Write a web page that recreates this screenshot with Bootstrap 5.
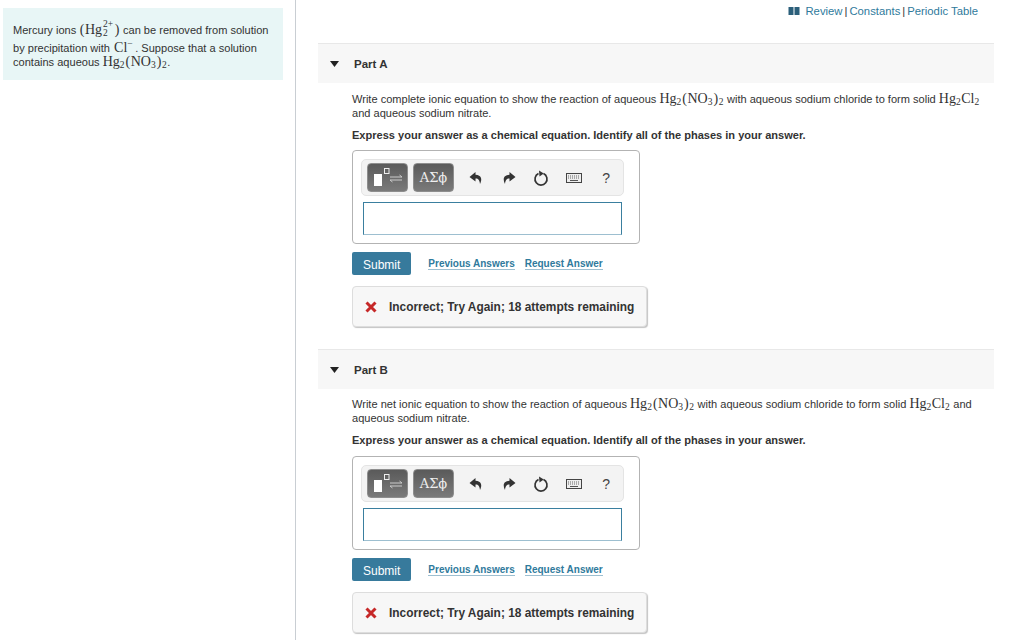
<!DOCTYPE html>
<html lang="en">

<head>
    <meta charset="UTF-8">
    <meta name="viewport" content="width=device-width, initial-scale=1.0">
    <link href="https://cdn.jsdelivr.net/npm/bootstrap@5.3.3/dist/css/bootstrap.min.css" rel="stylesheet">
    <title>Part A and Part B</title>

    <style>
        html, body {
            height: 640px;
            overflow: hidden;
        }

        body {
            font-family: "Liberation Sans", Arial, sans-serif;
            font-size: 11.05px;
            line-height: 14px;
            color: #333;
        }

        .left-pane {
            width: 296px;
            height: 640px;
            flex: none;
            padding: 8px 12px 0 3px;
            border-right: 1px solid #c9ced3;
        }

        .intro-box {
            background: #e8f6f6;
            padding: 15px 10px 10px;
            height: 72px;
        }

        .intro-box p {
            margin: 0;
        }

        .intro-box .first-line {
            margin-bottom: 3px;
        }

        .right-pane {
            padding: 0 30px 0 22px;
            min-width: 0;
        }

        .top-links {
            height: 43px;
            padding: 4px 16px 0 0;
            font-size: 11.3px;
            color: #333;
            gap: 5px;
        }

        .top-links a, .answer-links a {
            color: #2f7a9c;
            text-decoration: none;
        }

        .link-sep {
            margin: 0 2px;
        }

        .part-head {
            height: 40px;
            background: #f7f7f7;
            border-top: 1px solid #e8e8e8;
            font-weight: 700;
            font-size: 11.5px;
            padding-left: 12px;
            gap: 15px;
        }

        .part-body {
            padding: 9px 0 0 34px;
            height: 266px;
        }

        .part-body p {
            margin: 0;
        }

        .part-b {
            padding-top: 8px;
        }

        .part-b .answer-box {
            margin-top: 9px;
        }

        .chem {
            font-family: "Liberation Serif", "Times New Roman", serif;
            font-size: 14px;
            color: #333;
        }

        .chem sub, .chem sup {
            font-size: 9.5px;
            margin-right: .5px;
            line-height: 0;
        }

        .chem-paren {
            margin: 0 .5px;
        }

        .chem-ion {
            margin: 0 2px 0 1px;
        }

        .chem-stack {
            display: inline-flex;
            flex-direction: column;
            vertical-align: middle;
            font-size: 9.5px;
            line-height: 9px;
            margin: -4px 1px 0;
        }

        .express {
            font-weight: 700;
            margin-top: 8px !important;
        }

        .answer-box {
            width: 288px;
            height: 94px;
            margin-top: 8px;
            padding: 8px 15px 8px 8px;
            border: 1px solid #b3b3b3;
            border-radius: 4px;
        }

        .tool-row {
            height: 37px;
            padding: 3px 0 3px 5px;
            background: #f3f3f3;
            border: 1px solid #e4e4e4;
            border-radius: 5px;
        }

        .tool-dark {
            width: 41px;
            height: 29px;
            flex: none;
            background: linear-gradient(#5a5a5a, #7a7a7a);
            border: 1px solid #8e8e8e;
            border-radius: 4px;
            color: #eee;
            font-family: "DejaVu Serif", "Liberation Serif", serif;
            font-size: 13px;
        }

        .tool-tpl {
            margin-right: 5px;
        }

        .tool-sym {
            margin-right: 6px;
        }

        .tool-plain {
            width: 32.5px;
            flex: none;
            color: #444;
            font-size: 14px;
        }

        .math-input {
            height: 33px;
            margin: 6px 2px 0;
            border: 1px solid #3a7f9f;
            border-bottom-color: #9dbfd0;
            background: #fff;
        }

        .submit-btn {
            background: #377a9c;
            color: #fff;
            font-size: 12px;
            line-height: 14px;
            padding: 6px 11px 3px;
            border: 0;
            border-radius: 2px;
            height: 23px;
        }

        .answer-row {
            margin-top: 8px;
        }

        .answer-links {
            font-size: 10px;
            font-weight: 700;
            gap: 10px;
            margin-left: 17px;
        }

        .answer-links a {
            border-bottom: 1px solid #9dbfd0;
            line-height: 11px;
        }

        .feedback-box {
            width: 295px;
            height: 41px;
            margin-top: 11px;
            padding-left: 12px;
            gap: 12px;
            background: #f7f7f7;
            border: 1px solid #ddd;
            border-radius: 4px;
            box-shadow: 1px 1px 1px #c4c4c4;
            font-weight: 700;
            font-size: 11.9px;
        }
    </style>

</head>

<body>
    <svg width="0" height="0" class="position-absolute">
        <defs>
            <symbol id="icon-undo" viewBox="0 0 14 14">
                <path d="M6.5 1 L0.5 6 L6.5 10.5 V7.5 C9 7.3 10.5 8.5 11 13 C13.5 8 12.5 4 6.5 3.7 Z" fill="#333"/>
            </symbol>
            <symbol id="icon-templates" viewBox="0 0 30 24">
                <rect x="1" y="8" width="8" height="12" fill="#fff"/>
                <rect x="11.5" y="2.5" width="4.5" height="5" fill="none" stroke="#eee"/>
                <path d="M17 11 H29 L26.5 9 M29 14 H17 L19.5 16" fill="none" stroke="#ccc" stroke-width="1"/>
            </symbol>
        </defs>
    </svg>

    <div class="d-flex">
        <aside class="left-pane">
            <div class="intro-box">
                <p class="first-line">Mercury ions <span class="chem"><span class="chem-paren">(</span>Hg<span class="chem-stack"><span>2+</span><span>2</span></span><span class="chem-paren">)</span></span> can be removed from solution</p>
                <p>by precipitation with <span class="chem chem-ion">Cl<sup>&minus;</sup></span>. Suppose that a solution</p>
                <p>contains aqueous <span class="chem">Hg<sub>2</sub><span class="chem-paren">(</span>NO<sub>3</sub><span class="chem-paren">)</span><sub>2</sub></span>.</p>
            </div>
        </aside>

        <main class="right-pane flex-grow-1">
            <div class="top-links d-flex justify-content-end align-items-start">
                <svg width="12" height="14" viewBox="0 0 12 14"><path d="M0.5 3 H5.5 V11 H0.5 Z M6.5 3 H11.5 V11 H6.5 Z" fill="#2b5f7a"/></svg>
                <span><a href="#">Review</a><span class="link-sep">|</span><a href="#">Constants</a><span class="link-sep">|</span><a href="#">Periodic Table</a></span>
            </div>

            <section>
                <div class="part-head d-flex align-items-center">
                    <svg width="9" height="6" viewBox="0 0 9 6"><path d="M0 0 H9 L4.5 6 Z" fill="#222"/></svg>
                    <span>Part A</span>
                </div>
                <div class="part-body">
                    <p>Write complete ionic equation to show the reaction of aqueous <span class="chem">Hg<sub>2</sub><span class="chem-paren">(</span>NO<sub>3</sub><span class="chem-paren">)</span><sub>2</sub></span> with aqueous sodium chloride to form solid <span class="chem">Hg<sub>2</sub>Cl<sub>2</sub></span> and aqueous sodium nitrate.</p>
                    <p class="express">Express your answer as a chemical equation. Identify all of the phases in your answer.</p>
                    <div class="answer-box">
                        <div class="tool-row d-flex align-items-center">
                            <div class="tool-dark tool-tpl d-flex align-items-center justify-content-center"><svg width="30" height="24"><use href="#icon-templates"/></svg></div>
                            <div class="tool-dark tool-sym d-flex align-items-center justify-content-center">&Alpha;&Sigma;&#981;</div>
                            <div class="tool-plain d-flex justify-content-center"><svg width="14" height="14"><use href="#icon-undo"/></svg></div>
                            <div class="tool-plain d-flex justify-content-center"><svg width="14" height="14" viewBox="0 0 14 14"><use href="#icon-undo" transform="matrix(-1 0 0 1 14 0)"/></svg></div>
                            <div class="tool-plain d-flex justify-content-center"><svg width="16" height="16" viewBox="0 0 16 16"><path d="M5.5 3.6 A6 6 0 1 0 10.5 3.6" fill="none" stroke="#333" stroke-width="1.7"/><path d="M6 0.5 L10.8 3.4 L6.5 6.5 Z" fill="#333"/></svg></div>
                            <div class="tool-plain d-flex justify-content-center"><svg width="16" height="10" viewBox="0 0 16 10"><rect x="0.5" y="0.5" width="15" height="9" fill="#eee" stroke="#444"/><path d="M2 3 H14 M2 5 H14" stroke="#666" stroke-dasharray="1 1"/><path d="M4 7.5 H12" stroke="#555"/></svg></div>
                            <div class="tool-plain text-center">?</div>
                        </div>
                        <div class="math-input"></div>
                    </div>
                    <div class="answer-row d-flex align-items-center">
                        <button type="button" class="submit-btn">Submit</button>
                        <div class="answer-links d-flex"><a href="#">Previous Answers</a><a href="#">Request Answer</a></div>
                    </div>
                    <div class="feedback-box d-flex align-items-center">
                        <svg width="12" height="12" viewBox="0 0 12 12"><path d="M1.5 1.5 L10.5 10.5 M10.5 1.5 L1.5 10.5" stroke="#c62828" stroke-width="3"/></svg>
                        <span>Incorrect; Try Again; 18 attempts remaining</span>
                    </div>
                </div>
            </section>

            <section>
                <div class="part-head d-flex align-items-center">
                    <svg width="9" height="6" viewBox="0 0 9 6"><path d="M0 0 H9 L4.5 6 Z" fill="#222"/></svg>
                    <span>Part B</span>
                </div>
                <div class="part-body part-b">
                    <p>Write net ionic equation to show the reaction of aqueous <span class="chem">Hg<sub>2</sub><span class="chem-paren">(</span>NO<sub>3</sub><span class="chem-paren">)</span><sub>2</sub></span> with aqueous sodium chloride to form solid <span class="chem">Hg<sub>2</sub>Cl<sub>2</sub></span> and aqueous sodium nitrate.</p>
                    <p class="express">Express your answer as a chemical equation. Identify all of the phases in your answer.</p>
                    <div class="answer-box">
                        <div class="tool-row d-flex align-items-center">
                            <div class="tool-dark tool-tpl d-flex align-items-center justify-content-center"><svg width="30" height="24"><use href="#icon-templates"/></svg></div>
                            <div class="tool-dark tool-sym d-flex align-items-center justify-content-center">&Alpha;&Sigma;&#981;</div>
                            <div class="tool-plain d-flex justify-content-center"><svg width="14" height="14"><use href="#icon-undo"/></svg></div>
                            <div class="tool-plain d-flex justify-content-center"><svg width="14" height="14" viewBox="0 0 14 14"><use href="#icon-undo" transform="matrix(-1 0 0 1 14 0)"/></svg></div>
                            <div class="tool-plain d-flex justify-content-center"><svg width="16" height="16" viewBox="0 0 16 16"><path d="M5.5 3.6 A6 6 0 1 0 10.5 3.6" fill="none" stroke="#333" stroke-width="1.7"/><path d="M6 0.5 L10.8 3.4 L6.5 6.5 Z" fill="#333"/></svg></div>
                            <div class="tool-plain d-flex justify-content-center"><svg width="16" height="10" viewBox="0 0 16 10"><rect x="0.5" y="0.5" width="15" height="9" fill="#eee" stroke="#444"/><path d="M2 3 H14 M2 5 H14" stroke="#666" stroke-dasharray="1 1"/><path d="M4 7.5 H12" stroke="#555"/></svg></div>
                            <div class="tool-plain text-center">?</div>
                        </div>
                        <div class="math-input"></div>
                    </div>
                    <div class="answer-row d-flex align-items-center">
                        <button type="button" class="submit-btn">Submit</button>
                        <div class="answer-links d-flex"><a href="#">Previous Answers</a><a href="#">Request Answer</a></div>
                    </div>
                    <div class="feedback-box d-flex align-items-center">
                        <svg width="12" height="12" viewBox="0 0 12 12"><path d="M1.5 1.5 L10.5 10.5 M10.5 1.5 L1.5 10.5" stroke="#c62828" stroke-width="3"/></svg>
                        <span>Incorrect; Try Again; 18 attempts remaining</span>
                    </div>
                </div>
            </section>
        </main>
    </div>

    <script src="https://cdn.jsdelivr.net/npm/bootstrap@5.3.3/dist/js/bootstrap.bundle.min.js"></script>
</body>

</html>
